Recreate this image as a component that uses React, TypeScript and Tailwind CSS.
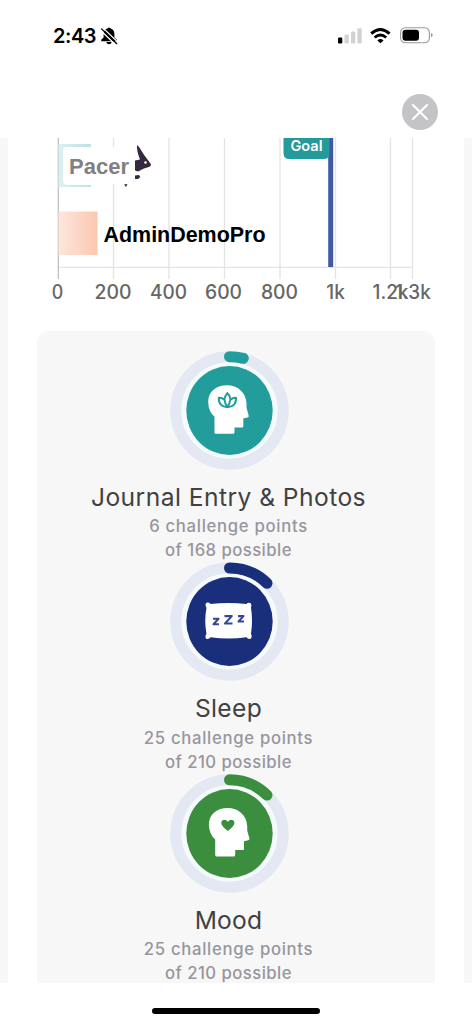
import React from "react";

const HEAD =
  "M54 92.200V76.500Q48 71.500 47.700 62C47.500 51 56 45 66.500 45C77 45 85.500 52 86 63L86 67.500L88.200 75.500Q88.500 77 87 77.300L82.800 78.300V86Q82.800 87.200 81.500 87.200H74V92Q74 93.500 72.500 93.500H55.300Q54 93.500 54 92.200Z";

function StatusBar() {
  return (
    <div className="flex h-[70px] items-center justify-between pl-[53px] pr-[39px] pt-[1px]">
      <div className="flex items-center gap-[4px]">
        <span className="font-['Inter'] text-[20px] font-semibold leading-6 tracking-[-0.45px] text-black">2:43</span>
        <svg width="18" height="18" viewBox="0 0 18 18">
          <path d="M1.200 14.300V12.700L3.600 10.500V7C3.600 4 5.300 2.200 7.300 1.600C7.500 .3 10.500 .3 10.700 1.600C13 2.300 14.400 4.200 14.400 7V10.500L16.800 12.700V14.300Z" />
          <path d="M6.300 15H11.700Q11.200 17.300 9 17.300T6.300 15Z" />
          <path d="M.2 3L15.800 18M2.700 .6L18.200 15.600" stroke="#fff" strokeWidth="1.200" />
          <path d="M1.200 1.600L17 17" stroke="#000" strokeWidth="1.300" />
        </svg>
      </div>
      <div className="flex items-center">
        <svg width="24" height="16" viewBox="0 0 24 16">
          <rect y="9.500" width="4.300" height="6" rx="1.200" />
          <rect x="6.500" y="6.500" width="4.300" height="9" rx="1.200" fill="#d2d2d2" />
          <rect x="13" y="3.500" width="4.300" height="12" rx="1.200" fill="#d2d2d2" />
          <rect x="19.400" y=".2" width="4.300" height="15.300" rx="1.200" fill="#d2d2d2" />
        </svg>
        <svg className="ml-[8.500px]" width="21" height="16" viewBox="0 0 21 16">
          <g fill="none" stroke="#000" strokeWidth="2.900">
            <path d="M1.200 5.700Q10.300 -2.500 19.600 5.700" />
            <path d="M4.600 9.500Q10.400 4.500 16.200 9.500" />
          </g>
          <path d="M7.300 12.400Q10.400 9.700 13.500 12.400L10.400 15.300Z" />
        </svg>
        <svg className="ml-[9px]" width="33" height="17" viewBox="0 0 33 17">
          <rect x=".6" y=".7" width="28.800" height="15" rx="4.800" fill="none" stroke="#999" strokeWidth="1.100" />
          <rect x="2.500" y="2.700" width="16.500" height="11" rx="3" />
          <path d="M31 6Q32.700 6.500 32.700 8T31 10.300Z" fill="#999" />
        </svg>
      </div>
    </div>
  );
}

const grid = [113.5, 169, 224.5, 280, 335.5, 390.5, 412.5];
const ticks: [string, number, number][] = [
  ["0", 57.5, 11.5],
  ["200", 113, 37],
  ["400", 168.5, 37],
  ["600", 223.5, 37],
  ["800", 279.5, 37],
  ["1k", 335.5, 18.5],
  ["1.2k", 390.5, 36],
  ["1.3k", 413, 35.5],
];

function Chart() {
  return (
    <svg className="block h-[193px] w-full shrink-0" viewBox="0 138 472 193">
      <defs>
        <linearGradient id="peach">
          <stop stopColor="#fde6dc" />
          <stop offset="1" stopColor="#fbc8b1" />
        </linearGradient>
        <linearGradient id="aqua">
          <stop stopColor="#dcf0f2" />
          <stop offset="1" stopColor="#bee0e4" />
        </linearGradient>
      </defs>
      <g stroke="#e4e4e4" strokeWidth="1.300">
        {grid.map((x) => (
          <path key={x} d={`M${x} 138V279`} />
        ))}
        <path d="M58 267.300H413" />
      </g>
      <path d="M58.300 138V279" stroke="#bcbcbc" strokeWidth="1.200" />
      <rect x="62" y="147" width="72" height="37" fill="#fff" />
      <rect x="58.500" y="144" width="32.500" height="43" fill="url(#aqua)" />
      <path d="M91 147H66Q63 147 63 151V180Q63 185 67 185H91Z" fill="#fff" />
      <path d="M137 145.300C138.500 145.500 141 150 143.500 154Q145.500 157 147.500 159.500L150.800 164Q151.500 166.500 148 167.300L144 168.500L138 171.500L135 170.500V160.500L140 159.500Q136.500 151 137 145.300Z" fill="#35283f" />
      <circle cx="145.500" cy="162.500" r="1.300" fill="#fff" />
      <path d="M135 175.500L139 175L140.300 177L138 179H135ZM124 184.500L127.500 184L126 187Z" fill="#35283f" />
      <text x="69" y="173.500" textLength="60" lengthAdjust="spacingAndGlyphs" className="fill-[#808080] font-['Liberation_Sans'] text-[22px] font-bold">Pacer</text>
      <rect x="58.500" y="211.500" width="39" height="43.500" fill="url(#peach)" />
      <text x="103.500" y="242" textLength="162" lengthAdjust="spacingAndGlyphs" className="fill-black font-['Liberation_Sans'] text-[22px] font-bold">AdminDemoPro</text>
      <rect x="328.200" y="138" width="5" height="129" fill="#4059a4" />
      <path d="M283.500 138H329.500V154Q329 159 324 159H289.500Q283.500 159 283.500 153Z" fill="#249a9b" />
      <text x="290.500" y="151" textLength="32" lengthAdjust="spacingAndGlyphs" className="fill-white font-['Inter'] text-[14px] font-semibold">Goal</text>
      {ticks.map(([label, x, width]) => (
        <text key={label} x={x} y="298.700" textAnchor="middle" textLength={width} lengthAdjust="spacingAndGlyphs" className="fill-[#666] font-['Inter'] text-[19.500px] font-[450]">{label}</text>
      ))}
    </svg>
  );
}

type Goal = {
  title: string;
  spacing: string;
  points: number;
  total: number;
  color: string;
  arc: string;
  icon: React.ReactNode;
};

const goals: Goal[] = [
  {
    title: "Journal Entry & Photos",
    spacing: "tracking-[0.45px]",
    points: 6,
    total: 168,
    color: "#229d9b",
    arc: "M69 15.900Q76 15.900 82.800 17.500",
    icon: (
      <g>
        <path d={HEAD} fill="#fff" transform="translate(0 -.6)" />
        <path d="M66.800 52.300Q70 55.500 69.800 59Q73 56.500 75.500 57Q76 66 66.800 66.500Q58 66 58.200 57Q61 56.500 64 59Q64 55.500 66.800 52.300ZM64 59Q64.500 63 66.800 66Q69.500 63 69.800 59" fill="none" stroke="#229d9b" strokeWidth="2" strokeLinejoin="round" />
      </g>
    ),
  },
  {
    title: "Sleep",
    spacing: "tracking-[0.35px]",
    points: 25,
    total: 210,
    color: "#192f7c",
    arc: "M69 16.200A53.500 53.500 0 0 1 106.500 31.500",
    icon: (
      <g>
        <path d="M50 52.200Q68 50 86 52.200Q87.500 50.300 90 51.300Q91.700 53 90.500 56Q92.500 69 90.500 82Q92 85.500 90 87Q87.500 87.700 86 85.500Q68 88 50 85.500Q48.500 88 45.700 87Q44 85 46 82Q43.500 69 46 56Q44 52.500 46 51Q48.500 50.300 50 52.200Z" fill="#fff" />
        <path d="M52.500 67H58L53 72.500H58.500M64 64.300H71.300L64.500 71.700H72M77.500 64.300H83L78 69.700H83.500" fill="none" stroke="#354996" strokeWidth="2.100" strokeLinejoin="round" />
      </g>
    ),
  },
  {
    title: "Mood",
    spacing: "tracking-[0.2px]",
    points: 25,
    total: 210,
    color: "#3b8e3d",
    arc: "M69 16A53.700 53.700 0 0 1 106.500 31.300",
    icon: (
      <g>
        <path d={HEAD} fill="#fff" transform="translate(.7 -.9)" />
        <path d="M67.300 67.200Q58 60 61.700 56.700Q65 54.500 67.300 58Q70 54.500 73 56.700Q76.700 60 67.300 67.200Z" fill="#3b8e3d" />
      </g>
    ),
  },
];

function GoalItem({ goal }: { goal: Goal }) {
  return (
    <section className="flex h-[211.500px] w-full shrink-0 flex-col items-center text-center font-['Inter']">
      <svg className="-ml-[14px] block h-[119px] w-[119px] shrink-0" viewBox="9.500 10.200 119 119">
        <circle cx="69" cy="69.700" r="53.700" fill="#f5fafc" stroke="#e3e8f2" strokeWidth="11" />
        <ellipse cx="69" cy="69.700" rx="43.200" ry="44.500" fill={goal.color} />
        <path d={goal.arc} fill="none" stroke={goal.color} strokeWidth="11" strokeLinecap="round" />
        {goal.icon}
      </svg>
      <h2 className={`-ml-[15px] mt-[11px] h-[33.500px] text-[24.600px] font-[430] leading-[33.500px] text-[#414141] ${goal.spacing}`}>{goal.title}</h2>
      <p className="-ml-[15px] h-6 text-[16.700px] font-[450] leading-6 tracking-[0.7px] text-[#98959e]">{goal.points} challenge points</p>
      <p className="-ml-[15px] h-6 text-[16.700px] font-[450] leading-6 tracking-[0.45px] text-[#98959e]">of {goal.total} possible</p>
    </section>
  );
}

export default function App() {
  return (
    <main className="flex h-[1024px] w-[472px] flex-col overflow-hidden bg-white">
      <header className="h-[138px] shrink-0">
        <StatusBar />
        <div className="flex justify-end pr-[34px] pt-[24px]">
          <button aria-label="Close" className="flex size-[36px] items-center justify-center rounded-full bg-[#c4c4c6]">
            <svg width="18" height="18" viewBox="0 0 18 18" stroke="#fff" strokeWidth="2.200" strokeLinecap="round">
              <path d="M2 2L16 16M16 2L2 16" />
            </svg>
          </button>
        </div>
      </header>
      <div className="h-[845px] shrink-0 bg-[#f7f7f7] px-2">
        <div className="flex h-full flex-col overflow-hidden bg-white">
          <div className="-mx-2 shrink-0">
            <Chart />
          </div>
          <div className="ml-[29px] flex w-[398px] shrink-0 flex-col items-center rounded-t-xl bg-[#f7f7f7] pt-[19.500px]">
            {goals.map((goal) => (
              <GoalItem key={goal.title} goal={goal} />
            ))}
          </div>
        </div>
      </div>
      <footer className="flex h-[41px] shrink-0 justify-center pt-[25px]">
        <div className="h-[6px] w-[168px] rounded-full bg-black" />
      </footer>
    </main>
  );
}
